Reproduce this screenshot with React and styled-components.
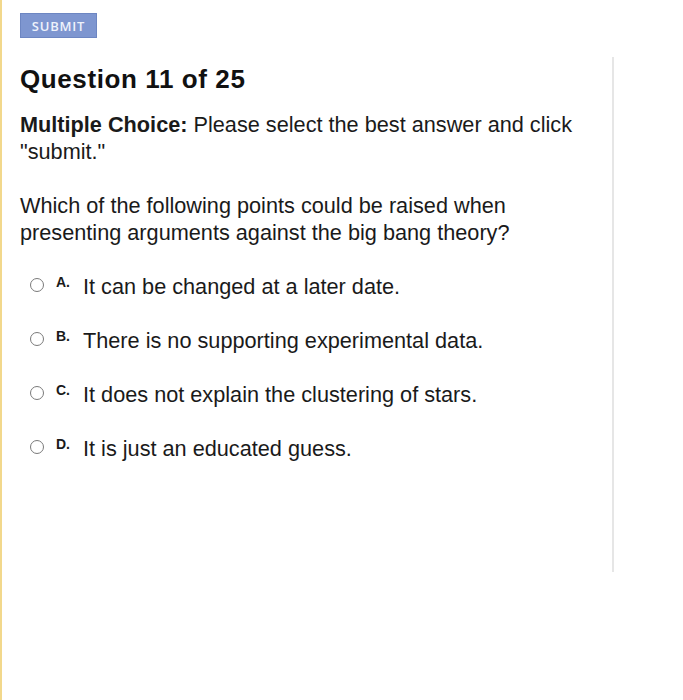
import React from "react";
import styled, { createGlobalStyle } from "styled-components";

const Global = createGlobalStyle`
  html, body { margin: 0; padding: 0; background: #fff; }
  body { font-family: "Liberation Sans", Arial, sans-serif; color: #111; }
`;

const Page = styled.div`
  min-height: 700px;
  box-sizing: border-box;
  border-left: 2px solid #f2d88c;
  padding: 13px 0 0 18px;
  display: flex;
  flex-direction: column;
  align-items: flex-start;
`;

const Toolbar = styled.div`
  display: flex;
  height: 25px;
  margin-bottom: 19px;
`;

const SubmitButton = styled.button`
  box-sizing: border-box;
  width: 77px;
  height: 25px;
  background: #7e96d0;
  border: 1px solid #6d86c2;
  color: #eef2fb;
  font-family: "Open Sans", sans-serif;
  font-weight: 600;
  font-size: 13px;
  letter-spacing: 0.8px;
  padding: 0;
  cursor: pointer;
`;

const Panel = styled.section`
  box-sizing: border-box;
  width: 594px;
  height: 515px;
  border-right: 2px solid #e6e6e6;
  padding-top: 8px;
`;

const Heading = styled.h1`
  margin: 0 0 18px;
  font-size: 26px;
  letter-spacing: 0.6px;
  line-height: 28px;
  font-weight: 700;
  color: #111;
`;

const Para = styled.p`
  margin: 0 0 27px;
  font-size: 21.7px;
  line-height: 27px;
  color: #1a1a1a;
  padding-right: 30px;
`;

const Options = styled.div`
  display: flex;
  flex-direction: column;
  gap: 27px;
`;

const Option = styled.label`
  display: flex;
  align-items: flex-start;
  padding-left: 10px;
  font-size: 21.7px;
  line-height: 27px;
  color: #1a1a1a;
  cursor: pointer;
`;

const Radio = styled.span`
  box-sizing: border-box;
  width: 14px;
  height: 14px;
  margin-top: 5px;
  border: 1.8px solid #7a7a7a;
  border-radius: 50%;
  flex: none;
`;

const Letter = styled.span`
  width: 27px;
  margin-left: 12px;
  margin-top: 3px;
  font-size: 14px;
  line-height: 13px;
  font-weight: 700;
  flex: none;
`;

const options = [
  ["A.", "It can be changed at a later date."],
  ["B.", "There is no supporting experimental data."],
  ["C.", "It does not explain the clustering of stars."],
  ["D.", "It is just an educated guess."],
];

export default function App() {
  return (
    <>
      <Global />
      <Page>
        <Toolbar>
          <SubmitButton>SUBMIT</SubmitButton>
        </Toolbar>
        <Panel>
          <Heading>Question 11 of 25</Heading>
          <Para>
            <b>Multiple Choice:</b> Please select the best answer and click "submit."
          </Para>
          <Para>
            Which of the following points could be raised when presenting arguments against the big bang theory?
          </Para>
          <Options>
            {options.map(([l, t]) => (
              <Option key={l}>
                <Radio />
                <Letter>{l}</Letter>
                <span>{t}</span>
              </Option>
            ))}
          </Options>
        </Panel>
      </Page>
    </>
  );
}
